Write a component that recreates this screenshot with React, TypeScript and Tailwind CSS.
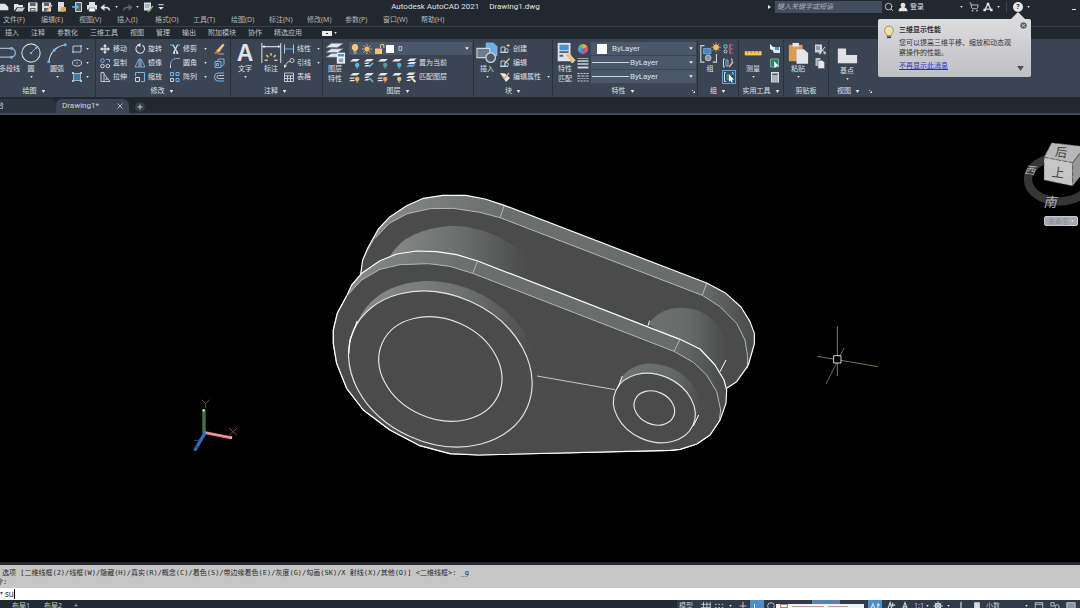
import type { ReactNode } from 'react';
import { Search, ShoppingCart } from 'lucide-react';

const menus = ['文件(F)', '编辑(E)', '视图(V)', '插入(I)', '格式(O)', '工具(T)', '绘图(D)', '标注(N)', '修改(M)', '参数(P)', '窗口(W)', '帮助(H)'];
const tabs = ['插入', '注释', '参数化', '三维工具', '视图', '管理', '输出', '附加模块', '协作', '精选应用'];

/* ---------- small helpers ---------- */

function Icon({ children, className = 'h-3 w-3' }: { children: ReactNode; className?: string }) {
    return (
        <svg viewBox="0 0 12 12" className={`shrink-0 ${className}`} fill="none" stroke="#cdd5dd" strokeWidth="1" aria-hidden="true">
            {children}
        </svg>
    );
}

function Caret({ big = false }: { big?: boolean }) {
    return (
        <svg viewBox="0 0 6 4" className={big ? 'h-[3px] w-[5px] shrink-0' : 'h-0.5 w-[3px] shrink-0'} aria-hidden="true">
            <path d="M0.5 0h5L3 4z" fill="#dfe4e9" />
        </svg>
    );
}

function Panel({ title, className, caret = true, corner = false, children }: { title: string; className: string; caret?: boolean; corner?: boolean; children: ReactNode }) {
    return (
        <section className={`flex shrink-0 flex-col border-r border-[#2b323e] ${className}`}>
            <div className="flex h-[46px] pt-[3px]">{children}</div>
            <div className="relative flex h-3 items-center justify-center gap-1">
                <span>{title}</span>
                {caret && <Caret big />}
                {corner && (
                    <svg viewBox="0 0 4 4" className="absolute right-0.5 h-[3px] w-[3px]" aria-hidden="true">
                        <path d="M0 0h1.200v1.200H0zM4 1v3H1z" fill="#dfe4e9" />
                    </svg>
                )}
            </div>
        </section>
    );
}

function Big({ label, label2, icon, className = 'w-6', caret = true }: { label: string; label2?: string; icon: ReactNode; className?: string; caret?: boolean }) {
    return (
        <button className={`flex shrink-0 flex-col items-center whitespace-nowrap ${className}`}>
            {icon}
            <span className="leading-[10px]">{label}</span>
            {label2 ? <span className="leading-[10px]">{label2}</span> : caret && <span className="mt-0.5 flex"><Caret /></span>}
        </button>
    );
}

function Small({ label, icon, caret = false, className = '' }: { label?: string; icon: ReactNode; caret?: boolean; className?: string }) {
    return (
        <button className={`flex h-3.5 items-center gap-0.5 whitespace-nowrap ${className}`}>
            {icon}
            {label && <span>{label}</span>}
            {caret && <span className="ml-auto flex pr-0.5"><Caret /></span>}
        </button>
    );
}

/* ---------- quick access icons ---------- */

function QuickAccess() {
    return (
        <div className="flex w-[165px] shrink-0 items-center">
            <Icon className="h-2.5 w-2.5"><path d="M-2 2h8l4 4v4H-2z" fill="#e4e4e4" stroke="none" /></Icon>
            <span className="w-[3px]" />
            <Icon><path d="M1 10V3h4l1 1h4v2H4z" fill="#e4e4e4" stroke="none" /><path d="M4.500 6.500H12L9.500 10.500H2.500z" fill="#c6c6c6" stroke="none" /></Icon>
            <span className="w-0.5" />
            <Icon><path d="M1 1.500h9.500v9H1z" fill="#dedede" stroke="none" /><path d="M3 2h5.500v3H3zM3 7h5.500v3.500H3z" fill="#59626e" stroke="none" /><path d="M4 8.200h3.500v1H4z" fill="#fff" stroke="none" /></Icon>
            <span className="w-0.5" />
            <Icon><path d="M1 1.500h9v9H1z" fill="#dedede" stroke="none" /><path d="M3 2h5v3H3zM3 7h4v3.500H3z" fill="#59626e" stroke="none" /><path d="M6 10l5-6" stroke="#e9a45f" strokeWidth="1.600" /></Icon>
            <span className="w-[3px]" />
            <Icon><path d="M2 1h6v9.500H2z" fill="#dedede" stroke="none" /><path d="M5 6h5v4.500H4z" fill="#dda85b" stroke="none" /></Icon>
            <span className="w-[3px]" />
            <Icon><path d="M4.500 1.500h6v9h-6z" stroke="#cdd5dd" fill="#59626e" /><path d="M1 6h5M4.500 3.800L7 6 4.500 8.200" stroke="#64b1ed" strokeWidth="1.400" /></Icon>
            <span className="w-[3px]" />
            <Icon><path d="M3 1h6v3H3zM1 4h10v4.500H1z" fill="#dedede" stroke="none" /><path d="M3 7h6v3.500H3z" fill="#fff" stroke="#738397" strokeWidth=".7" /></Icon>
            <span className="w-0.5" />
            <Icon><path d="M2 6.500h5q3 0 3.500 3" stroke="#dfe4e9" strokeWidth="1.500" /><path d="M1.500 6.500L5.500 3v7z" fill="#dfe4e9" stroke="none" /></Icon>
            <span className="w-1" />
            <Caret />
            <span className="w-1" />
            <Icon><path d="M10 6.500H5Q2 6.500 1.500 9.500" stroke="#5c6672" strokeWidth="1.500" /><path d="M10.500 6.500L6.500 3v7z" fill="#5c6672" stroke="none" /></Icon>
            <span className="w-0.5" />
            <Caret />
            <span className="w-1" />
            <Icon><path d="M1 1.500h7v8H1z" fill="#dedede" stroke="none" /><path d="M2 4h5M2 6h4" stroke="#5b8fbf" /><path d="M5 11l5-6" stroke="#83b65c" strokeWidth="1.600" /></Icon>
            <span className="w-0.5" />
            <Icon className="h-2 w-2"><path d="M2 2.500h8" strokeWidth="1.600" /><path d="M2 6h8l-4 4z" fill="#dfe4e9" stroke="none" /></Icon>
        </div>
    );
}

function TitleBar() {
    return (
        <header className="flex h-[13px] shrink-0 items-center text-[#dfe3e7]">
            <QuickAccess />
            <h1 className="flex flex-1 justify-center gap-2.5 whitespace-pre font-['Roboto',sans-serif] text-[8px] leading-[13px]">
                <span>Autodesk AutoCAD 2021</span>
                <span>Drawing1.dwg</span>
            </h1>
            <div className="flex w-[314px] shrink-0 items-center">
                <svg viewBox="0 0 3 4" className="mr-1 ml-0.5 h-1 w-[3px]" aria-hidden="true"><path d="M0 0v4l3-2z" fill="#e8eaed" /></svg>
                <input type="text" aria-label="键入关键字或短语" placeholder="键入关键字或短语" className="h-3 w-[107px] bg-[#434d60] px-0.5 italic leading-3 placeholder:text-[#a9b0b9]" />
                <button aria-label="搜索" className="ml-0.5"><Search className="h-2.5 w-2.5 text-[#cdd3d9]" /></button>
                <button className="ml-1 flex items-center gap-0.5">
                    <Icon className="h-2.5 w-2.5"><path d="M6 1a2.800 2.800 0 0 1 1.400 5.300Q11 7 11.500 11H.5Q1 7 4.600 6.300A2.800 2.800 0 0 1 6 1z" fill="#e4e4e4" stroke="none" /></Icon>
                    <span>登录</span>
                </button>
                <span className="ml-9 flex"><Caret /></span>
                <button aria-label="购物车" className="ml-1.5"><ShoppingCart className="h-2.5 w-2.5 text-[#cdd3d9]" /></button>
                <Icon className="ml-1 h-2.5 w-2.5"><path d="M6 2L2 10M6 2l4 8M3 8.500h6" strokeWidth="1.700" /><path d="M4.500 1h3v3h-3zM.5 8h3v3h-3zM8.500 8h3v3h-3z" fill="#dfe4e9" stroke="none" /></Icon>
                <span className="ml-1 flex"><Caret /></span>
                <span className="ml-1.5 h-2.5 w-px bg-[#3e4652]" />
                <button aria-label="帮助" className="ml-1.5 flex h-2.5 w-2.5 items-center justify-center rounded-full bg-[#e8e8e8] font-bold text-[#30363e]">?</button>
                <span className="ml-1 flex"><Caret /></span>
                <span className="mt-1.5 mr-1 ml-auto h-px w-1 bg-[#dfe4e9]" />
            </div>
        </header>
    );
}

/* ---------- ribbon icons ---------- */

function Stack({ dot, gold = false }: { dot: string; gold?: boolean }) {
    return (
        <Icon>
            <path d="M1 4.500L4 2h7L8 4.500z" fill="#e3e7ea" stroke="none" />
            {gold && <path d="M1 6.500h5l-1 1.200H.5zM1 9h5l-1 1.200H.5z" fill="#dfe3e7" stroke="none" />}
            <circle cx="8.200" cy="8" r="2.200" fill={dot} stroke="none" />
            <path d="M7.200 11h2" stroke={dot} />
        </Icon>
    );
}

function Combo({ label, options, children, className = '' }: { label: string; options: string[]; children: ReactNode; className?: string }) {
    return (
        <div className={`flex h-[13px] items-center bg-[#4b576b] ${className}`}>
            {children}
            <select aria-label={label} className="h-full min-w-0 flex-1 appearance-none bg-transparent font-['Roboto',sans-serif] text-[8px] leading-3">
                {options.map((o) => (
                    <option key={o}>{o}</option>
                ))}
            </select>
            <span className="flex pr-[3px]">
                <svg viewBox="0 0 6 4" className="h-[3px] w-1" aria-hidden="true"><path d="M0 0h6L3 4z" fill="#e4e8ec" /></svg>
            </span>
        </div>
    );
}

function Ribbon() {
    return (
        <div className="flex h-[58px] shrink-0 overflow-hidden bg-[#3b4453] text-[#dde1e6]">
            {/* 绘图 */}
            <Panel title="绘图" className="w-24 [&>div:last-child]:pr-[27px]">
                <Big className="w-[19px]" caret={false} label="多段线" icon={<Icon className="h-[22px] w-[22px]"><path d="M0 3.500h6.500a2.400 2.400 0 0 1 0 4.800H0" stroke="#a5b4c4" strokeWidth=".7" /><path d="M6.300 3h1v1h-1zM6.300 7.800h1v1h-1z" fill="#74b6ef" stroke="#74b6ef" strokeWidth=".5" /></Icon>} />
                <Big label="圆" icon={<Icon className="h-[22px] w-[22px]"><circle cx="6" cy="6" r="5" strokeWidth=".6" /><path d="M6 6l2.800-2.800" stroke="#74b6ef" strokeWidth=".5" /><path d="M5.500 5.500h1v1h-1zM8.300 2.700h1v1h-1z" fill="#74b6ef" stroke="none" /></Icon>} />
                <Big className="w-7" label="圆弧" icon={<Icon className="h-[22px] w-[22px]"><path d="M1.500 11Q2.500 3 10.500 1.500" strokeWidth=".6" /><path d="M1 10.300h1v1H1zM4 4h1v1H4zM10 1h1v1h-1z" fill="#74b6ef" stroke="#74b6ef" strokeWidth=".4" /></Icon>} />
                <div className="w-5">
                    <Small caret className="w-5" icon={<Icon><path d="M2 3h8v6H2z" strokeWidth=".9" /><path d="M1 8h2v2H1zM9 2h2v2H9z" fill="#74b6ef" stroke="none" /></Icon>} />
                    <Small caret className="w-5" icon={<Icon><ellipse cx="6" cy="6" rx="4.500" ry="3" strokeWidth=".9" /><path d="M5.300 5.300h1.400v1.400H5.300z" fill="#74b6ef" stroke="none" /></Icon>} />
                    <Small caret className="w-5" icon={<Icon><path d="M2.500 2.500h7v7h-7z" fill="#47749f" strokeWidth=".7" /><path d="M1 1h2v2H1zM9 1h2v2H9zM1 9h2v2H1zM9 9h2v2H9z" fill="#9ccbf2" stroke="none" /></Icon>} />
                </div>
            </Panel>

            {/* 修改 */}
            <Panel title="修改" className="w-[135px] [&>div:last-child]:pr-0.5">
                <div className="ml-[3px] w-[35px]">
                    <Small label="移动" icon={<Icon><path d="M6 2v8M2 6h8" strokeWidth="1.400" /><path d="M6 1l2 2.500H4zM6 11l2-2.500H4zM1 6l2.500-2v4zM11 6L8.500 4v4z" fill="#e4e8ec" stroke="none" /></Icon>} />
                    <Small label="复制" icon={<Icon><circle cx="3.500" cy="3.500" r="1.800" stroke="#74b6ef" /><circle cx="3.500" cy="9" r="1.800" /><circle cx="8.800" cy="9" r="1.800" /><path d="M7 2.500h3.500V5" stroke="#74b6ef" /></Icon>} />
                    <Small label="拉伸" icon={<Icon><path d="M2 1.500h3v9H2zM5 10.500h6L5 3" strokeWidth=".9" /><path d="M6 9L7.500 6 9 9z" fill="#74b6ef" stroke="none" /></Icon>} />
                </div>
                <div className="w-[35px]">
                    <Small label="旋转" icon={<Icon><path d="M4.500 2A4.300 4.300 0 1 0 8.500 2.300" strokeWidth="1.100" /><path d="M6.500 0l-.2 4L3 2z" fill="#e4e8ec" stroke="none" /></Icon>} />
                    <Small label="镜像" icon={<Icon><path d="M5 2v8H1zM7 2v8h4z" stroke="#7fb4e2" strokeWidth=".9" /><path d="M6 1v10" strokeWidth=".5" /></Icon>} />
                    <Small label="缩放" icon={<Icon><path d="M1.500 5V1.500H10.500v9H7" stroke="#74b6ef" /><path d="M1.500 6.500h4v4h-4z" /></Icon>} />
                </div>
                <div className="w-10">
                    <Small caret className="w-10" label="修剪" icon={<Icon><path d="M1 2h3.500M8 2h3" stroke="#74b6ef" strokeWidth="1.200" /><path d="M4 2l3.500 6M8.500 2L5.500 8" strokeWidth="1.400" /><path d="M4.500 8h1.500v3h-2zM7 8h1.500l1 3h-2z" fill="#dfe4e9" stroke="none" /></Icon>} />
                    <Small caret className="w-10" label="圆角" icon={<Icon><path d="M1.500 10.500V7Q2 2 7 1.500h4" stroke="#78a7d0" strokeWidth="1" /><path d="M1.500 8v3" /></Icon>} />
                    <Small caret className="w-10" label="阵列" icon={<Icon><path d="M1.500 1.500h3v3h-3zM7 1.500h3v3H7zM7 7.500h3v3H7z" stroke="#74b6ef" /><path d="M1.500 7.500h3v3h-3z" /></Icon>} />
                </div>
                <div className="ml-1 w-3">
                    <Small icon={<Icon><path d="M3 8L10 .5 11.500 2 6 9.500z" fill="#f1c38a" stroke="none" /><path d="M1 10.500l2.500-3L6 9.500l-2 1.500z" fill="#e7694f" stroke="none" /><path d="M5 11h6" strokeWidth=".7" /></Icon>} />
                    <Small icon={<Icon><path d="M2 4.500h6v6H2zM4 4.500L5.500 2H11v5.500L8 9.500" stroke="#74b6ef" /><path d="M3.500 6.500h2v2h-2z" stroke="#cdd5dd" strokeWidth=".7" /></Icon>} />
                    <Small icon={<Icon><path d="M11 2H5Q1.500 2 1.500 6T5 10h6" stroke="#74b6ef" /><path d="M11 4.500H5.500Q4 4.500 4 6t1.500 1.500H11" strokeWidth=".9" /></Icon>} />
                </div>
            </Panel>

            {/* 注释 */}
            <Panel title="注释" className="w-[92px] [&>div:last-child]:pr-0.5">
                <Big className="w-7" label="文字" icon={<span className="flex h-[22px] items-center font-['Liberation_Sans',sans-serif] text-[23px] font-bold leading-[22px] text-[#dfe3e7]">A</span>} />
                <Big className="w-6" caret={false} label="标注" icon={<Icon className="h-[22px] w-[22px]"><path d="M1 .5v11M11.300.5v11M1 2.500h10" strokeWidth=".6" /><path d="M1 2.500l1.500-.8v1.600zM11.300 2.500l-1.500-.8v1.600z" fill="#dfe3e7" stroke="none" /><path d="M6 6v1.500M3.500 7l1 1.300M8.500 7l-1 1.300M2.500 10h1.700M7.800 10h1.700" stroke="#f2bf68" strokeWidth=".8" /></Icon>} />
                <div className="flex-1">
                    <Small caret className="w-full" label="线性" icon={<Icon><path d="M1.500 1.500v9M10.500 1.500v9" strokeWidth=".9" /><path d="M2 6h8" stroke="#74b6ef" strokeWidth=".9" /></Icon>} />
                    <Small caret className="w-full" label="引线" icon={<Icon><circle cx="9" cy="3.500" r="2" strokeWidth=".9" /><path d="M7 4Q4 4.500 2 9" strokeWidth=".9" /><path d="M1 7.500l3 1.500-3 2z" fill="#dfe3e7" stroke="none" /></Icon>} />
                    <Small label="表格" icon={<Icon><path d="M1.500 2h9v8.500h-9zM1.500 4.800h9M1.500 7.600h9M4.500 4v6.500M7.500 4v6.500" strokeWidth=".9" /></Icon>} />
                </div>
            </Panel>

            {/* 图层 */}
            <Panel title="图层" className="w-[151px]">
                <Big className="w-6" label="图层" label2="特性" icon={<Icon className="h-[22px] w-[22px]"><path d="M1 3l3-2.300h6.500L7.500 3zM1 5.700l3-2h6.500l-3 2zM1 8.300l3-2h6.500l-3 2z" fill="#e3e7ea" stroke="#687484" strokeWidth=".3" /><path d="M7 5.800h4.500v6H7z" fill="#eef3f8" stroke="none" /><path d="M7.500 6.500h3.500v1.400H7.500z" fill="#4d93d4" stroke="none" /><path d="M8 9h2.500v2H8z" fill="#8ba4bb" stroke="none" /></Icon>} />
                <div className="ml-0.5 min-w-0 flex-1 pr-px">
                    <Combo label="图层" options={['0', '定义点']} className="mb-px">
                        <Icon><path d="M6 1a3.200 3.200 0 0 1 1.600 6V8.500H4.400V7A3.200 3.200 0 0 1 6 1z" fill="#f5c979" stroke="none" /><path d="M4.500 10h3" /></Icon>
                        <Icon><circle cx="6" cy="6" r="2.300" fill="#f2bd67" stroke="none" /><path d="M6 1v10M1 6h10M2.500 2.500l7 7M9.500 2.500l-7 7" stroke="#f2bd67" strokeWidth=".8" /></Icon>
                        <Icon><path d="M2 5.500h7v5.500H2z" fill="#f0c37b" stroke="none" /><path d="M7.500 5V3a1.700 1.700 0 0 1 3.400 0v2" stroke="#f0c37b" strokeWidth="1.100" /></Icon>
                        <span className="mr-1 ml-px h-2 w-2 bg-white" />
                    </Combo>
                    <div className="flex h-3.5 items-center gap-0.5">
                        <Stack dot="#58bdd8" />
                        <Icon><path d="M1 4.500L4 2h7L8 4.500zM1 7l2-1.500h4L5 7zM1 9.500L3 8h4L5 9.500z" fill="#e3e7ea" stroke="none" /><path d="M6 10l4-4" stroke="#7cb7e8" strokeWidth="1.400" /></Icon>
                        <Stack dot="#4e9f9d" />
                        <Stack dot="#45b7cf" />
                        <Small label="置为当前" icon={<Icon><path d="M2 4l3-2.500h6.500L9 4zM2 7l3-2h6.500L9 7z" fill="#e3e7ea" stroke="none" /><path d="M1 10l3-2.500h6.500L8 10z" fill="#5f9fd8" stroke="none" /></Icon>} />
                    </div>
                    <div className="flex h-3.5 items-center gap-0.5">
                        <Stack dot="#f0b65c" gold />
                        <Icon><path d="M1 4.500L4 2h7L8 4.500zM1 7l2-1.500h4L5 7zM1 9.500L3 8h4L5 9.500z" fill="#e3e7ea" stroke="none" /><path d="M6.500 7l3.500 4" stroke="#7cb7e8" strokeWidth="1.400" /></Icon>
                        <Stack dot="#f0a653" gold />
                        <Stack dot="#e5bd80" />
                        <Small label="匹配图层" icon={<Icon><path d="M1 4l3-2.500h6.500L8 4zM1 7l3-2h6.500L8 7zM1 10l2-1.500h3L5 10z" fill="#e3e7ea" stroke="none" /><path d="M6.500 7l4 4" stroke="#f5e2bd" strokeWidth="2" /></Icon>} />
                    </div>
                </div>
            </Panel>

            {/* 块 */}
            <Panel title="块" className="w-[79px]">
                <Big className="ml-px w-6" label="插入" icon={<Icon className="h-[22px] w-[22px]"><path d="M5.500.5h4L11.500 2.500v5h-6z" fill="#69aee8" stroke="#a9d0f0" strokeWidth=".3" /><path d="M.5 3.500h7v5h-7z" fill="#717a87" strokeWidth=".6" /><circle cx="8" cy="8.500" r="2.600" fill="#4d5765" strokeWidth=".7" /></Icon>} />
                <div className="flex-1">
                    <Small label="创建" icon={<Icon><path d="M2 4h4v5H2zM1 9.500h8" strokeWidth=".9" /><circle cx="7.500" cy="7.500" r="1.800" strokeWidth=".9" /><path d="M9 1v3M7.500 2.500h3.500" stroke="#f0b65c" /></Icon>} />
                    <Small label="编辑" icon={<Icon><path d="M2 4h4v5H2zM1 9.500h8" strokeWidth=".9" /><circle cx="7.500" cy="7.500" r="1.800" strokeWidth=".9" /><path d="M6.500 5.500l4-4" stroke="#f0c88c" strokeWidth="1.300" /></Icon>} />
                    <Small caret className="w-full" label="编辑属性" icon={<Icon><path d="M1 2l5 .5L11 7 7 11z" fill="#e5e8eb" stroke="none" /><path d="M4 6l1.500 1.500L10 2" stroke="#e9a45f" strokeWidth="1.300" /></Icon>} />
                </div>
            </Panel>

            {/* 特性 */}
            <Panel title="特性" corner className="w-[145px] [&>div:last-child]:pr-1">
                <Big className="w-6" label="特性" label2="匹配" icon={<Icon className="h-[22px] w-[22px]"><path d="M2 .5h7v10H2z" fill="#dce2e7" stroke="none" /><path d="M3 1.500h5v3H3z" fill="#4b91cb" stroke="none" /><path d="M3 5.500h5M3 7.500h2" stroke="#526071" /><path d="M6 7l2-1 3.500 4-1.500 1.500z" fill="#eac47f" stroke="#f6e6c5" strokeWidth=".4" /></Icon>} />
                <div className="w-3.5">
                    <Small icon={<Icon><path d="M6 6V1a5 5 0 0 1 4.500 3z" fill="#f4a742" stroke="none" /><path d="M6 6l4.500-2a5 5 0 0 1-1.500 6z" fill="#dc577a" stroke="none" /><path d="M6 6l3 4a5 5 0 0 1-6 0z" fill="#9066bf" stroke="none" /><path d="M6 6l-3 4a5 5 0 0 1-1.500-6z" fill="#4aa2d8" stroke="none" /><path d="M6 6L1.500 4A5 5 0 0 1 6 1z" fill="#72bf70" stroke="none" /></Icon>} />
                    <Small icon={<Icon><path d="M.5 1.500h11" strokeWidth=".7" /><path d="M.5 4h11M.5 7h11" strokeWidth="1.400" /><path d="M.5 10.500h11" strokeWidth="2" /></Icon>} />
                    <Small icon={<Icon><path d="M.5 2.500h11" strokeDasharray="2 1" /><path d="M.5 5h11" strokeDasharray="3 1" /><path d="M.5 7.500h11" strokeDasharray="1 1" /><path d="M.5 10h11" strokeDasharray="2 1" /></Icon>} />
                </div>
                <div className="flex min-w-0 flex-1 flex-col gap-px pr-px">
                    <Combo label="颜色" options={['ByLayer', 'ByBlock']}><span className="mr-[5px] ml-1.5 h-2.5 w-2.5 bg-white" /></Combo>
                    <Combo label="线宽" options={['ByLayer', 'ByBlock']}><span className="mr-px ml-px h-px w-[37px] bg-[#d2d7dc]" /></Combo>
                    <Combo label="线型" options={['ByLayer', 'ByBlock']}><span className="mr-px ml-px h-px w-[37px] bg-[#d2d7dc]" /></Combo>
                </div>
            </Panel>

            {/* 组 */}
            <Panel title="组" className="w-[41px]">
                <Big className="w-6" caret={false} label="组" icon={<Icon className="h-[22px] w-[22px]"><path d="M3 2H1v9h2M7.500 11h2V6.500" strokeWidth=".6" /><path d="M2.500 3.500h4v3h-4z" fill="#4c86bd" stroke="#74b6ef" strokeWidth=".4" /><circle cx="5" cy="8.700" r="1.600" fill="#8c949e" strokeWidth=".4" /><circle cx="9.300" cy="2.800" r="1.500" fill="#f2bd67" stroke="none" /><path d="M9.300.2v5.200M6.700 2.800h5.200M7.500 1l3.600 3.600M11.100 1L7.500 4.600" stroke="#f2bd67" strokeWidth=".4" /></Icon>} />
                <div>
                    <Small icon={<Icon><path d="M2 2h3v3H2z" stroke="#74b6ef" /><circle cx="3.500" cy="8.500" r="1.500" /><path d="M8 1v4M8 7v4M9.500 2H11M9.500 10H11M6.500 6H11" stroke="#df6e86" strokeWidth="1.200" /></Icon>} />
                    <Small icon={<Icon><path d="M3 2H1.500v8H3M9 2h1v3" /><path d="M4 3h2v6H4z" stroke="#74b6ef" /><path d="M7 10l4-5" stroke="#f0b67a" strokeWidth="1.500" /></Icon>} />
                    <Small className="w-3.5 border border-[#61a5df] bg-[#2b5275]" icon={<Icon><path d="M3 1.500H1.500v9H3M9 1.500h1V4" /><path d="M3.500 3h4v6h-4z" fill="#3e9278" stroke="none" /><path d="M6 3.500l5 5-2.200.2 1 2.300-1.300.4-.9-2.200L6 11z" fill="#fff" stroke="none" /></Icon>} />
                </div>
            </Panel>

            {/* 实用工具 */}
            <Panel title="实用工具" className="w-[45px]">
                <Big className="w-7" label="测量" icon={<Icon className="h-[22px] w-[22px]"><path d="M1.500 5h9.200v2.300H1.500z" fill="#f2c568" stroke="none" /><path d="M3 5v1.200M5 5v1.200M7 5v1.200M9 5v1.200" stroke="#81683a" strokeWidth=".4" /></Icon>} />
                <div className="ml-0.5">
                    <Small icon={<Icon><path d="M2 4h9v6H5z" fill="#dfe4e8" stroke="none" /><path d="M6 4h4v3H6z" fill="#4c98d8" stroke="none" /><path d="M1 1l4 4-1.500.3.500 2L1 6z" fill="#fff" stroke="none" /></Icon>} />
                    <Small icon={<Icon><path d="M1.500 2h8v8h-8z" fill="#347a61" stroke="#58ba96" /><path d="M5 4l5 5-2.200.2-2.300 1.800z" fill="#fff" stroke="none" /></Icon>} />
                    <Small icon={<Icon><path d="M2 1h8v10.500H2z" fill="#d8dce0" stroke="none" /><path d="M3.300 2.500h5.400v1.800H3.300z" fill="#4e5865" stroke="none" /><path d="M3.300 6h5.400M3.300 8h5.400M3.300 10h5.400" stroke="#4e5865" strokeDasharray="1.200 .8" /></Icon>} />
                </div>
            </Panel>

            {/* 剪贴板 */}
            <Panel title="剪贴板" caret={false} className="w-[45px]">
                <Big className="w-7" label="粘贴" icon={<Icon className="h-[22px] w-[22px]"><path d="M1 1.500h7.500v9H1z" fill="#d99c56" stroke="none" /><path d="M3 .5h3.500v2H3z" fill="#e5e7ea" stroke="none" /><path d="M5.200 4h4L11.500 6v5.800H5.200z" fill="#e3e5e8" stroke="none" /></Icon>} />
                <div className="ml-0.5">
                    <Small icon={<Icon><path d="M1 1.500h7v8H1z" fill="#cfd4d9" stroke="none" /><path d="M2 4h4M2 6h4" stroke="#5a6471" /><path d="M6 4l5 6M11 4l-5 6" /><circle cx="6" cy="10" r="1" /><circle cx="10.800" cy="10" r="1" /></Icon>} />
                    <Small icon={<Icon><path d="M1.500 1h5v8h-5z" fill="#b6bdc5" stroke="none" /><path d="M4 3.500h4.500l2 2v6H4z" fill="#e5e7ea" stroke="#59626e" strokeWidth=".6" /></Icon>} />
                </div>
            </Panel>

            {/* 视图 */}
            <Panel title="视图" corner className="w-[43px] border-r-0 [&>div:last-child]:-mr-0.5 [&>div:last-child]:pr-1.5">
                <Big className="ml-1 w-7" label="基点" icon={<Icon className="h-6 w-[22px]"><path d="M1 3h4.500v3.500h6v4.500H1z" fill="#dfe1e4" stroke="none" /></Icon>} />
            </Panel>
        </div>
    );
}

/* ---------- drawing area ---------- */

function BeltModel() {
    return (
        <svg viewBox="0 0 1350 870" className="absolute top-[65px] left-[320px] h-[290px] w-[450px]" fill="none" stroke="#fff" strokeWidth="3.500" strokeLinejoin="round" aria-hidden="true">
            <defs>
                <linearGradient id="rim" x1="0" x2="1">
                    <stop offset="0" stopColor="#8a8d8c" />
                    <stop offset=".35" stopColor="#6a6e6d" />
                    <stop offset=".86" stopColor="#686d6b" />
                    <stop offset="1" stopColor="#494a4a" />
                </linearGradient>
                <linearGradient id="boss" x1="0" x2="1">
                    <stop offset="0" stopColor="#858988" />
                    <stop offset=".5" stopColor="#686c6b" />
                    <stop offset=".9" stopColor="#4b4b4b" />
                </linearGradient>
                <linearGradient id="pin" x1="0" x2="1">
                    <stop offset="0" stopColor="#6e7271" />
                    <stop offset=".5" stopColor="#666b69" />
                    <stop offset="1" stopColor="#4b4b4b" />
                </linearGradient>
            </defs>

            {/* rear plate */}
            <path d="M122 282L128 240L143 205L175 147L208 112L260 77L310 55L368 46H437L495 57L553 76L1160 309L1215 338L1263 381L1290 425L1303 460V492L1285 555L1250 605L1220 625L700 600Z" fill="url(#rim)" stroke="none" />
            <path d="M122 282L128 240L165 175L208 130L262 101L330 86L400 85L480 97L540 113L1147 346L1200 380L1250 430L1275 480L1283 530L1282 565L1250 605L1220 625L700 600Z" fill="#4b4b4b" stroke="none" />
            <path d="M165 175L208 130L262 101L330 86L400 85L480 97L540 113L1147 346L1200 380L1250 430L1275 480L1283 530L1282 565M540 113L553 76M1147 346L1160 309" stroke="#b5b6b6" strokeWidth="3" />
            <path d="M122 282L128 240L143 205L175 147L208 112L260 77L310 55L368 46H437L495 57L553 76L1160 309L1215 338L1263 381L1290 425L1303 460V492L1285 555L1250 605L1220 625" />

            {/* spacers between the plates */}
            <path d="M208 232Q250 150 390 137Q540 137 665 270V310H300Z" fill="url(#boss)" stroke="none" />
            <path d="M985 432Q1020 383 1085 383Q1150 385 1190 430Q1222 470 1220 545L1200 575Z" fill="url(#pin)" stroke="none" />
            <path d="M984 437L989 422M1200 575L1218 540" strokeWidth="3" />

            {/* front plate */}
            <path d="M80 348L95 315L125 280L180 242L230 222L290 213L350 215L410 224L473 243L1080 478L1140 507L1185 555L1212 600L1220 630L1218 670L1200 720L1170 765L1130 792L1080 808L1050 811L475 825L390 821L300 797L210 750L130 690L80 625L50 550L40 490V450L52 400Z" fill="url(#rim)" />
            <path d="M80 348L125 300L180 268L240 254L325 251L390 259L458 280L1062 514L1120 547L1160 585L1190 635L1202 690L1198 722L1170 765L1130 792L1080 808L1050 811L475 825L390 821L300 797L210 750L130 690L80 625L50 550L40 490V450L52 400Z" fill="#4b4b4b" stroke="none" />
            <path d="M80 348L125 300L180 268L240 254L325 251L390 259L458 280L1062 514L1120 547L1160 585L1190 635L1202 690L1198 722M458 280L473 243M1062 514L1080 478" stroke="#b5b6b6" strokeWidth="3" />
            <path d="M1200 720L1170 765L1130 792L1080 808L1050 811L475 825L390 821L300 797L210 750L130 690L80 625L50 550L40 490V450L52 400L80 348" />
            <path d="M651 588L885 629" stroke="#c8c8c8" strokeWidth="3" />

            {/* large hub */}
            <ellipse cx="375" cy="537" rx="285" ry="222" transform="rotate(24.2 375 537)" fill="url(#boss)" stroke="none" />
            <ellipse cx="361" cy="567" rx="285" ry="222" transform="rotate(24.2 361 567)" fill="#4b4b4b" stroke="#e4e4e4" />
            <ellipse cx="361" cy="567" rx="191" ry="149" transform="rotate(24.2 361 567)" stroke="#e4e4e4" />
            <path d="M86 520L90 480L112 423" />

            {/* small hub */}
            <ellipse cx="1015" cy="655" rx="127" ry="99" transform="rotate(24.2 1015 655)" fill="url(#pin)" stroke="none" />
            <ellipse cx="1003" cy="684" rx="127" ry="99" transform="rotate(24.2 1003 684)" fill="#4b4b4b" stroke="#e4e4e4" />
            <ellipse cx="1003" cy="684" rx="63" ry="49" transform="rotate(24.2 1003 684)" stroke="#e4e4e4" />
            <path d="M895 620L907 588M1136 705L1120 738" strokeWidth="3" />
        </svg>
    );
}

function ViewCube() {
    return (
        <div className="absolute top-[15px] right-0 h-[110px] w-20">
            <svg viewBox="0 0 240 330" className="h-full w-full font-['Noto_Sans_CJK_SC',sans-serif]" aria-hidden="true">
                <ellipse cx="178" cy="148" rx="94" ry="66" fill="none" stroke="#363636" strokeWidth="25" />
                <path d="M132 82L155 38L255 50L218 98Z" fill="#b8b8b8" />
                <path d="M132 82L218 98V168L132 150Z" fill="#c6c6c6" />
                <path d="M218 98L255 50V120L218 168Z" fill="#989898" />
                <path d="M132 82L218 98V168L132 150ZM132 82L155 38L255 50L218 98L255 50" fill="none" stroke="#444" strokeWidth="2" strokeDasharray="14 5" />
                <text x="166" y="79" fontSize="36" fill="#3c3c3c" transform="rotate(8 180 65)">后</text>
                <text x="155" y="142" fontSize="38" fill="#3c3c3c" transform="rotate(8 175 130)">上</text>
                <text x="74" y="132" fontSize="32" fontStyle="italic" fill="#b2b2b2" transform="rotate(8 88 122)">西</text>
                <text x="130" y="231" fontSize="40" fontStyle="italic" fill="#b2b2b2">南</text>
            </svg>
            <button className="absolute right-0.5 bottom-3.5 flex h-2.5 w-[34px] items-center justify-center gap-0.5 rounded-xs border border-[#c9cad0] bg-[#a9abb4] text-[7px] leading-none text-[#858894]">
                未命名 <Caret />
            </button>
        </div>
    );
}

function Viewport() {
    return (
        <main className="relative min-h-0 flex-1 overflow-hidden bg-black">
            <BeltModel />
            {/* UCS icon */}
            <svg viewBox="0 0 210 210" className="absolute bottom-[102px] left-[180px] h-[70px] w-[70px]" fill="none" strokeLinecap="round" aria-hidden="true">
                <path d="M72 127V62" stroke="#427543" strokeWidth="10" />
                <path d="M76 128L152 143" stroke="#cf7774" strokeWidth="9" />
                <path d="M74 130L46 178" stroke="#376ab5" strokeWidth="10" />
                <path d="M78 128L150 142" stroke="#ebb0ae" strokeWidth="3" />
                <circle cx="71" cy="61" r="4" fill="#b1d8b1" />
                <circle cx="153" cy="143" r="4" fill="#ebb0ae" />
                <path d="M66 30l11 11 11-11M77 41v11" stroke="#39623a" strokeWidth="3" />
                <path d="M148 115l22 20M170 115l-22 20" stroke="#96403f" strokeWidth="3" />
                <path d="M42 151h15l-12 20h12" stroke="#243e70" strokeWidth="3" />
            </svg>
            {/* crosshair */}
            <svg viewBox="0 0 240 210" className="absolute top-[205px] left-[810px] h-[70px] w-20" fill="none" strokeWidth="3" aria-hidden="true">
                <path d="M82 18V168" stroke="#777c70" />
                <path d="M22 109L204 140" stroke="#876d60" />
                <path d="M48 192L102 84" stroke="#65677e" />
                <path d="M71 107h22v22H71z" fill="#000" stroke="#d5d5d5" />
            </svg>
            <ViewCube />
        </main>
    );
}

/* ---------- balloon ---------- */

function Balloon() {
    return (
        <aside className="absolute top-[19px] right-[49px] h-[58px] w-[153px] rounded-xs bg-gradient-to-b from-[#dcdcdd] to-[#bfc0c4] text-[#30343a]">
            <svg viewBox="0 0 14 7" className="absolute -top-[7px] right-1.5 h-[7px] w-3.5" aria-hidden="true"><path d="M0 7L7 0l7 7z" fill="#dcdcdd" /></svg>
            <Icon className="absolute top-1.5 left-1 h-[14px] w-3.5">
                <path d="M6 .8a3.900 3.900 0 0 1 2 7.200v1H4V8A3.900 3.900 0 0 1 6 .8z" fill="#eee2a6" stroke="#958659" strokeWidth=".7" />
                <path d="M4.200 9.700h3.600v1.600H4.200z" fill="#3f4248" stroke="none" />
            </Icon>
            <div className="pt-1.5 pl-[21px] leading-[10px]">
                <strong className="block">三维显示性能</strong>
                <p className="mt-[3px] w-[116px]">您可以提高三维平移、缩放和动态观察操作的性能。</p>
                <a href="#hide" className="mt-[3px] block text-[#2b31d2] underline">不再显示此消息</a>
            </div>
            <button aria-label="关闭" className="absolute top-[3px] right-1">
                <Icon className="h-[7px] w-[7px]"><circle cx="6" cy="6" r="5.500" fill="#62666c" stroke="none" /><path d="M3.800 3.800l4.400 4.400M8.200 3.800L3.800 8.200" stroke="#e2e2e2" strokeWidth="1.500" /></Icon>
            </button>
            <button aria-label="更多" className="absolute right-[7px] bottom-1.5">
                <svg viewBox="0 0 8 6" className="h-[5px] w-[7px]"><path d="M0 0h8L4 6z" fill="#4b4f56" /></svg>
            </button>
        </aside>
    );
}

/* ---------- bottom bars ---------- */

function StatusBar() {
    return (
        <footer className="flex h-2 shrink-0 items-start overflow-hidden bg-[#222a35] pt-px leading-[9px] text-[#c3c9d0]">
            <button className="ml-3">布局1</button>
            <button className="ml-3.5">布局2</button>
            <button className="ml-3">+</button>
            <div className="-mt-px ml-auto flex h-2 w-[403px] items-start bg-[#313a48] pt-px">
                <button className="ml-0.5">模型</button>
                <Icon className="ml-2 h-2.5 w-2.5"><path d="M0 4h12M0 8h12M3 1v10M7 1v10M11 1v10" /></Icon>
                <Icon className="ml-1 h-2.5 w-2.5"><path d="M0 4h12M0 8h12" strokeDasharray="2 2" /></Icon>
                <span className="mt-1 ml-1"><Caret /></span>
                <Icon className="ml-1.5 h-2.5 w-2.5"><path d="M6 1v10M2 6h8" /></Icon>
                <span className="-mt-px ml-0.5 flex h-2 w-3.5 items-end bg-[#4e8dc9] pl-1"><span className="h-1 w-px bg-white" /></span>
                <Icon className="ml-0.5 h-2.5 w-2.5"><circle cx="6" cy="6" r="4" /></Icon>
                <span className="-mt-px flex h-2 w-[88px] flex-col">
                    <span className="ml-9 h-1 w-7 bg-[#5584b1]" />
                    <span className="flex h-1 items-center gap-1 bg-[#f0f1f2] px-1">
                        <span className="h-1 w-2 border border-[#c1826c]" />
                        <span className="h-px w-8 bg-[#c79b8e]" />
                        <span className="h-px w-5 bg-[#c79b8e]" />
                    </span>
                </span>
                <span className="-mt-px ml-1 flex h-2 w-3.5 justify-center overflow-hidden bg-[#4e8dc9]"><Icon><path d="M1 11l3-7 3 7M8 5h3M9 3v5" strokeWidth="1.300" /></Icon></span>
                <Icon className="ml-1 h-2.5 w-2.5"><path d="M2 10l3-8 2 8M8 2v5M6 5h5" strokeWidth="1.400" /></Icon>
                <Icon className="ml-1 h-2.5 w-2.5"><path d="M3 10l3-8 3 8M4 7h4" strokeWidth="1.400" /></Icon>
                <button className="ml-1">1:1</button>
                <span className="mt-1 ml-0.5"><Caret /></span>
                <Icon className="ml-1 h-2.5 w-2.5"><circle cx="6" cy="6" r="3" strokeWidth="2" /><path d="M6 0v12M0 6h12M2 2l8 8M10 2l-8 8" /></Icon>
                <span className="mt-1 ml-1"><Caret /></span>
                <Icon className="ml-1.5 h-2.5 w-2.5"><path d="M6 1v10" strokeWidth="1.500" /></Icon>
                <Icon className="ml-1.5 h-2.5 w-2.5"><path d="M3 2h6v8H3z" fill="#d8dce0" /></Icon>
                <button className="ml-1">小数</button>
                <span className="mt-1 ml-auto"><Caret /></span>
                <Icon className="ml-1.5 h-2.5 w-2.5"><path d="M1.500 2h9v8h-9zM1.500 4h9" /></Icon>
                <Icon className="ml-1.5 h-2.5 w-2.5"><path d="M1 2h4v4H1z" /><circle cx="8.500" cy="7" r="2.500" /></Icon>
                <Icon className="mr-1 ml-1.5 h-2.5 w-2.5"><path d="M1 2h10v8H1z" fill="#8b949f" /></Icon>
            </div>
        </footer>
    );
}

export default function App() {
    return (
        <div className="relative flex h-screen w-full flex-col overflow-hidden bg-[#212830] font-['Noto_Sans','Noto_Sans_CJK_SC',sans-serif] text-[7px] leading-[10px]">
            <TitleBar />

            <nav className="flex h-3.5 shrink-0 items-center gap-3.5 border-b border-[#363e4a] pl-[3px] text-[#b1b6bc]">
                {menus.map((m) => (
                    <button key={m} className="w-6 shrink-0 whitespace-nowrap text-left">{m}</button>
                ))}
            </nav>

            <nav className="flex h-3 shrink-0 items-center gap-3 pl-[5px] text-[#bcc2c9]">
                {tabs.map((t) => (
                    <button key={t} className="shrink-0 whitespace-nowrap">{t}</button>
                ))}
                <button aria-label="最小化" className="ml-2 flex items-center gap-0.5">
                    <span className="flex h-[5px] w-2.5 items-center justify-center bg-[#e7e9eb]"><span className="h-px w-0.5 bg-[#333]" /></span>
                    <Caret />
                </button>
            </nav>

            <Ribbon />

            {/* document tabs */}
            <div className="flex h-[18px] shrink-0 items-end border-b-2 border-[#424956] bg-[#212830] font-['Roboto','Noto_Sans_CJK_SC',sans-serif] text-[8px] text-[#d0d5db]">
                <button className="flex h-3.5 w-14 items-center overflow-hidden rounded-tr-md bg-[#2b333f]"><span className="-ml-1">台</span></button>
                <div className="flex h-3.5 w-[73px] items-center justify-between rounded-t-md bg-[#3b4453] px-1.5">
                    <span>Drawing1*</span>
                    <button aria-label="关闭图形">
                        <Icon className="h-1.5 w-1.5"><path d="M1 1l10 10M11 1L1 11" strokeWidth="1.600" /></Icon>
                    </button>
                </div>
                <button aria-label="新图形" className="mb-px ml-1.5 flex h-2.5 w-2.5 items-center justify-center rounded-full bg-[#343c48]">
                    <Icon className="h-1.5 w-1.5"><path d="M6 1v10M1 6h10" strokeWidth="1.800" /></Icon>
                </button>
            </div>

            <Viewport />

            {/* command line */}
            <div className="shrink-0 border-t-[3px] border-[#26292d] bg-[#c6c6c6] text-[#28292b]">
                <div className="h-[23px] whitespace-nowrap pt-1 font-['DejaVu_Sans_Mono','Noto_Sans_CJK_SC',monospace] leading-[9px]">
                    <p className="pl-0.5">选项 [二维线框(2)/线框(W)/隐藏(H)/真实(R)/概念(C)/着色(S)/带边缘着色(E)/灰度(G)/勾画(SK)/X 射线(X)/其他(O)] &lt;二维线框&gt;: _g</p>
                    <p className="-ml-1">令:</p>
                </div>
                <label className="flex h-3 items-center bg-white text-[8px]">
                    <svg viewBox="0 0 3 4" className="mr-0.5 h-1 w-[3px]" aria-hidden="true"><path d="M0 0h3L1.500 3z" fill="#55585c" /></svg>
                    <input type="text" aria-label="命令" defaultValue="su" className="field-sizing-content h-2.5 border-r border-black leading-[10px] outline-none" />
                </label>
            </div>

            <StatusBar />
            <Balloon />
        </div>
    );
}
